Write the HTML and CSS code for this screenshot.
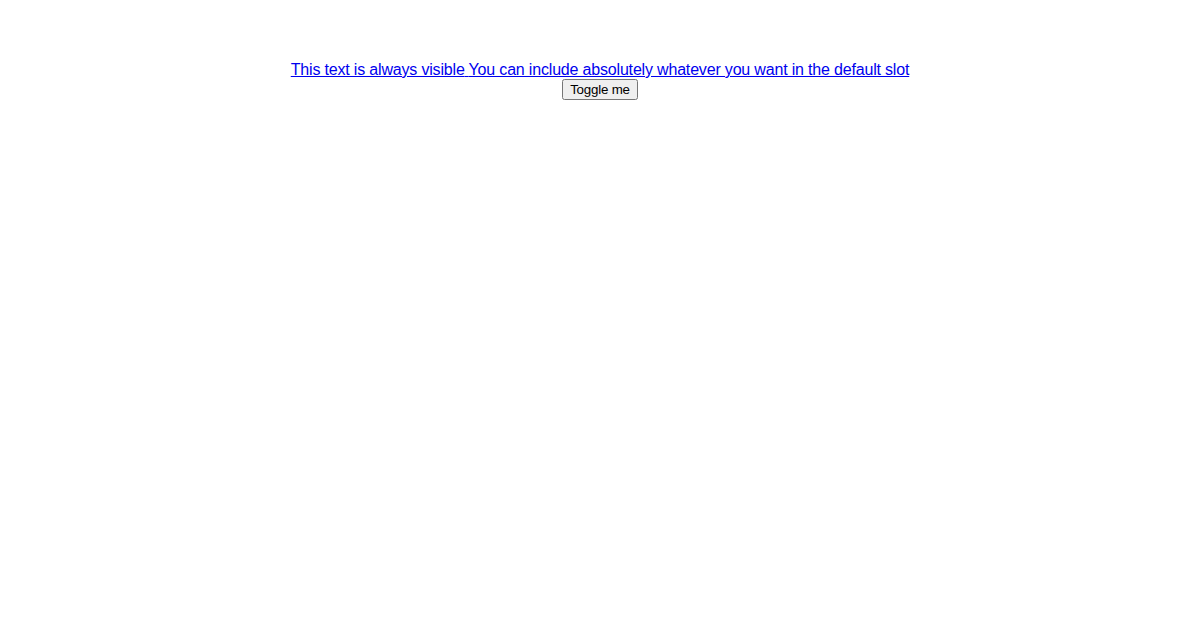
FILE: index.html
```html
<!DOCTYPE html>
<html>
<head>
<meta charset="utf-8">
<link rel="stylesheet" href="styles.css">
</head>
<body>
<div class="app">
  <div class="toggle">
    <a href="#" class="toggle-link"><span>This text is always visible</span> <span>You can include absolutely whatever you want in the default slot</span></a>
    <div class="toggle-actions"><button class="toggle-button" type="button">Toggle me</button></div>
  </div>
</div>
</body>
</html>
```
FILE: styles.css
```css
body {
  margin: 8px;
  font-family: "Liberation Sans", Arial, sans-serif;
  background: #ffffff;
}
.app {
  margin-top: 53px;
  text-align: center;
  color: #2c3e50;
  font-size: 16px;
}
.toggle-link {
  color: #0000ee;
  text-decoration: underline;
  letter-spacing: -0.18px;
}
.toggle-actions {
  line-height: normal;
}
.toggle-button {
  font-family: "Liberation Sans", Arial, sans-serif;
  font-size: 13.333px;
  letter-spacing: -0.2px;
  color: #000000;
  margin: 0;
}
```
